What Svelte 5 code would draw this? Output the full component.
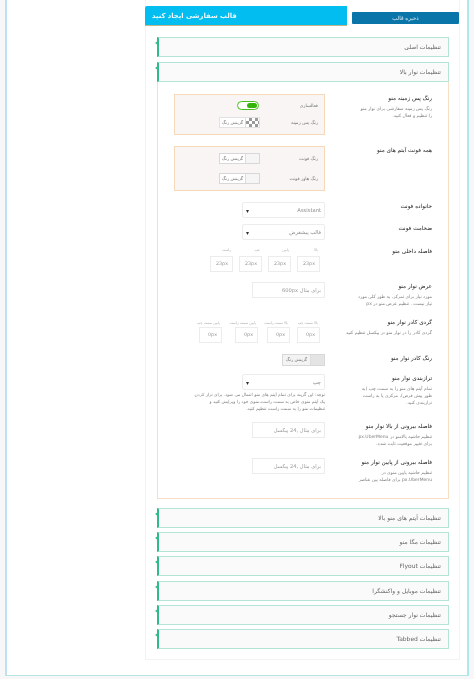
<script>
  const topItems = ['تنظیمات اصلی'];
  const bottomItems = ['تنظیمات آیتم های منو بالا','تنظیمات مگا منو','تنظیمات Flyout','تنظیمات موبایل و واکنشگرا','تنظیمات نوار جستجو','تنظیمات Tabbed'];
</script>

{#snippet item(text)}
  <div class="item"><i class="tick"></i><span>{text}</span></div>
{/snippet}
{#snippet colorBtn(cls)}
  <div class="colorbtn {cls}"><span class="swatch"></span><span class="cbtext">گزینش رنگ</span></div>
{/snippet}

<div class="frame" dir="rtl">
  <div class="card">
    <div class="head">
      <div class="save-wrap"><button class="save">ذخیره قالب</button></div>
      <div class="title">قالب سفارشی ایجاد کنید</div>
    </div>
    <div class="body">
      {#each topItems as t}{@render item(t)}{/each}
      <div class="open">
        {@render item('تنظیمات نوار بالا')}
        <div class="panel">
          <div class="row a">
            <div class="lab"><b>رنگ پس زمینه منو</b><p>رنگ پس زمینه سفارشی برای نوار منو<br>را تنظیم و فعال کنید.</p></div>
            <div class="ctrl"><div class="box box1">
              <div class="boxrow"><span class="boxlab">فعالسازی</span><span class="toggle"><i></i></span></div>
              <div class="boxrow"><span class="boxlab">رنگ پس زمینه</span>{@render colorBtn('checker')}</div>
            </div></div>
          </div>
          <div class="row b">
            <div class="lab"><b>همه فونت آیتم های منو</b></div>
            <div class="ctrl"><div class="box box2">
              <div class="boxrow"><span class="boxlab">رنگ فونت</span>{@render colorBtn('')}</div>
              <div class="boxrow"><span class="boxlab">رنگ هاور فونت</span>{@render colorBtn('')}</div>
            </div></div>
          </div>
          <div class="row c">
            <div class="lab"><b>خانواده فونت</b></div>
            <div class="ctrl"><div class="sel"><span>Assistant</span><i>▾</i></div></div>
          </div>
          <div class="row d">
            <div class="lab"><b>ضخامت فونت</b></div>
            <div class="ctrl"><div class="sel"><span>قالب پیشفرض</span><i>▾</i></div></div>
          </div>
          <div class="row e">
            <div class="lab"><b>فاصله داخلی منو</b></div>
            <div class="ctrl"><div class="quad q1">
              {#each ['بالا','پایین','چپ','راست'] as l}
                <div class="qc"><small>{l}</small><div class="inp">23px</div></div>
              {/each}
            </div></div>
          </div>
          <div class="row f">
            <div class="lab"><b>عرض نوار منو</b><p>مورد نیاز برای تمرکز، به طور کلی مورد<br>نیاز نیست . تنظیم عرض منو در px</p></div>
            <div class="ctrl"><div class="inp wide">برای مثال 600px</div></div>
          </div>
          <div class="row g">
            <div class="lab"><b>گردی کادر نوار منو</b><p>گردی کادر را در نوار منو در پیکسل تنظیم کنید</p></div>
            <div class="ctrl"><div class="quad q2">
              {#each ['بالا سمت چپ','بالا سمت راست','پایین سمت راست','پایین سمت چپ'] as l}
                <div class="qc"><small>{l}</small><div class="inp">0px</div></div>
              {/each}
            </div></div>
          </div>
          <div class="row h">
            <div class="lab"><b>رنگ کادر نوار منو</b></div>
            <div class="ctrl">{@render colorBtn('gray')}</div>
          </div>
          <div class="row i">
            <div class="lab"><b>ترازبندی نوار منو</b><p>تمام آیتم های منو را به سمت چپ (به<br>طور پیش فرض)، مرکزی یا به راست<br>ترازبندی کنید.</p></div>
            <div class="ctrl">
              <div class="sel"><span>چپ</span><i>▾</i></div>
              <p class="note">توجه: این گزینه برای تمام آیتم های منو اعمال می شود. برای تراز کردن<br>یک آیتم منوی خاص به سمت راست،منوی خود را ویرایش کنید و<br>تنظیمات منو را به سمت راست تنظیم کنید.</p>
            </div>
          </div>
          <div class="row j">
            <div class="lab"><b>فاصله بیرونی از بالا نوار منو</b><p>تنظیم حاشیه بالامنو در px.UberMenu<br>برای تغییر موقعیت ثابت شده.</p></div>
            <div class="ctrl"><div class="inp wide">برای مثال ,24 پیکسل</div></div>
          </div>
          <div class="row k">
            <div class="lab"><b>فاصله بیرونی از پایین نوار منو</b><p>تنظیم حاشیه پایین منوی در<br>px.UberMenu برای فاصله بین عناصر</p></div>
            <div class="ctrl"><div class="inp wide">برای مثال ,24 پیکسل</div></div>
          </div>
        </div>
      </div>
      <div class="list">
        {#each bottomItems as t}{@render item(t)}{/each}
      </div>
    </div>
  </div>
</div>

<style>
  :global(body) { margin: 0; background: #f7f7f8; }
  .frame {
    box-sizing: border-box;
    width: 464px; height: 676px; margin-left: 5px; padding: 0 7px 0 0;
    background: #fff;
    border: 1px solid #b6e6e4; border-top: 0;
    border-left: 2px solid #bfe0f0;
    border-right: 2px solid #b0e8ea;
    font-family: "DejaVu Sans", sans-serif;
    color: #555;
    overflow: hidden;
    filter: blur(0.3px);
  }
  .card {
    box-sizing: border-box;
    width: 315px; height: 660px;
    border: 1px solid #f3f3f3; border-top: 0;
    padding-top: 6px;
  }
  .head { display: flex; height: 20px; align-items: flex-start; margin-bottom: 11px; }
  .save-wrap { width: 112px; padding: 6px 0 0 0; box-sizing: border-box; display: flex; justify-content: flex-start; }
  .save {
    width: 107px; height: 12px; padding: 0; border: 0; border-radius: 1px;
    background: #0a75a8; color: #dbeef6; font: 5.5px "DejaVu Sans", sans-serif;
  }
  .title {
    flex: 1; height: 20px; margin-left: -1px; box-sizing: border-box;
    background: #02bdf0; border-bottom: 1px solid #c4b48a;
    color: #eafaff; font-size: 6.8px; line-height: 20px; font-weight: bold;
    text-align: left; padding-left: 7px; border-radius: 2px 0 0 0;
  }
  .body { padding: 0 10px 0 11px; }
  .item {
    position: relative; box-sizing: border-box; height: 20px;
    background: #fafafa;
    border: 1px solid #b4e4d6; border-left: 2px solid #2fb98c;
    padding-right: 7px;
    font-size: 6px; line-height: 18px; color: #666;
    margin-bottom: 5px;
  }
  .tick {
    position: absolute; left: -4px; top: 3px; width: 0; height: 0;
    border: 2px solid transparent; border-left-width: 0; border-right: 3px solid #2fb98c;
  }
  .open .item { margin-bottom: 0; }
  .panel {
    box-sizing: border-box; height: 417px; padding: 12px 16px 0 0;
    border: 1px solid #f7dfc5; border-top: 0;
  }
  .row { display: flex; gap: 7px; }
  .a { height: 52px; } .b { height: 56px; } .c { height: 22px; } .d { height: 23px; }
  .e { height: 35px; } .f { height: 36px; } .g { height: 36px; } .h { height: 20px; }
  .i { height: 48px; } .j { height: 36px; } .k { height: 41px; }
  .lab { width: 100px; flex: none; white-space: nowrap; }
  .lab b { display: block; font-size: 5.7px; line-height: 8px; color: #222; font-weight: normal; }
  .lab p { margin: 3px 0 0; font-size: 4.5px; line-height: 7px; color: #808080; }
  .ctrl { flex: 1; display: flex; flex-direction: column; align-items: flex-start; }
  .box {
    box-sizing: border-box; width: 151px; background: #f8f5f4;
    border: 1px solid #f6d9b8; padding: 0 6px 0 0;
    display: flex; flex-direction: column; justify-content: space-around;
  }
  .box1 { height: 41px; padding-block: 2px; }
  .box2 { height: 45px; padding-block: 2px; }
  .boxrow { display: flex; align-items: center; }
  .boxlab { width: 53px; flex: none; font-size: 4.5px; color: #777; white-space: nowrap; }
  .toggle {
    box-sizing: border-box; width: 22px; height: 9px; border: 1px solid #46c01e; border-radius: 5px;
    background: #fff; margin-right: 6px; display: flex; justify-content: flex-start; align-items: center; padding: 0 1px;
  }
  .toggle i { width: 10px; height: 5px; border-radius: 3px; background: #32b508; }
  .colorbtn {
    box-sizing: border-box; width: 41px; height: 11px; margin-right: 5px;
    display: flex; border: 1px solid #d8d8d8; background: #fff; align-items: stretch;
  }
  .swatch { width: 13px; flex: none; background: #f5f5f5; }
  .cbtext { flex: 1; font-size: 4.4px; line-height: 9px; text-align: center; color: #777; border-right: 1px solid #ddd; white-space: nowrap; }
  .checker .swatch {
    background: repeating-conic-gradient(#9a9a9a 0 25%, #fff 0 50%) 0 0 / 6px 6px;
  }
  .checker { border-color: #e2e2e2; }
  .gray { width: 43px; height: 12px; margin: 0; background: #eee; }
  .gray .cbtext { background: #f3f3f3; }
  .gray .swatch { background: #e4e4e4; }
  .sel {
    box-sizing: border-box; width: 83px; height: 16px; padding: 0 3px;
    display: flex; justify-content: space-between; align-items: center;
    border: 1px solid #ececec; border-radius: 2px; background: #fff;
    font-size: 5.2px; color: #888;
  }
  .sel i { font-style: normal; color: #333; font-size: 6px; }
  .inp {
    box-sizing: border-box; height: 16px; border: 1px solid #ececec; background: #fff;
    font-size: 4.8px; line-height: 14px; color: #999; padding: 0 4px; white-space: nowrap;
  }
  .wide { width: 73px; font-size: 5.2px; padding: 0 3px; }
  .quad { display: flex; margin-top: 3px; }
  .q1 { gap: 6px; padding-right: 5px; margin-top: 1px; }
  .q1 .qc { padding-top: 8px; }
  .q2 { padding-right: 5px; }
  .q2 .qc:nth-child(1) { margin-left: 7px; }
  .q2 .qc:nth-child(2) { margin-left: 9px; }
  .q2 .qc:nth-child(3) { margin-left: 13px; }
  .qc { width: 23px; position: relative; padding-top: 6px; }
  .qc small {
    position: absolute; top: 0; right: 2px; font-size: 3.5px; line-height: 5px; color: #aaa; white-space: nowrap;
  }
  .note { margin: 2px 0 0; font-size: 4.4px; line-height: 6.8px; color: #808080; white-space: nowrap; }
  .list { padding-top: 8.5px; }
  .list .item { margin-bottom: 4.4px; }
</style>
